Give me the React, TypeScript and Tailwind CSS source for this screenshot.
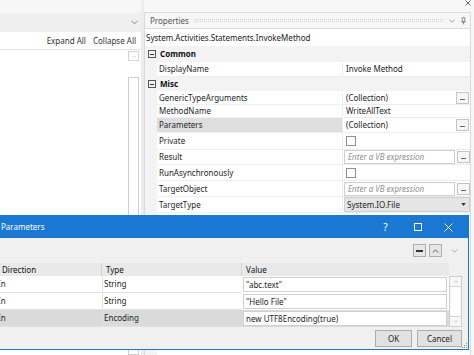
import React from 'react';

const Chevron = ({ className = '' }: { className?: string }) => (
  <svg viewBox="0 0 8 5" className={className} fill="none" stroke="currentColor" strokeWidth="1">
    <path d="M0.5 0.5 4 4 7.5 0.5" />
  </svg>
);

const Expander = () => (
  <div className="w-[8px] h-[8px] border border-[#555] flex items-center justify-center">
    <div className="w-[4px] h-px bg-[#333]" />
  </div>
);

const Dots = () => (
  <div className="w-[13px] h-[12px] border border-[#c4c4c4] bg-[#f6f6f6] flex items-end justify-center pb-[3px]">
    <div className="w-[5px] h-px bg-[#666]" />
  </div>
);

const Check = () => <div className="ml-[3px] w-[10px] h-[10px] border border-[#8f8f8f] bg-white" />;

const Expr = () => (
  <div className="ml-[1px] w-[111px] h-[14px] border border-[#cfcfcf] bg-white italic text-[#8e8e8e] pl-[3px] flex items-center">
    Enter a VB expression
  </div>
);

type Prop = { name: string; h: string; value: React.ReactNode; selected?: boolean };

const Category = ({ label, h }: { label: string; h: string }) => (
  <div className={`flex items-center bg-[#f3f3f3] ${h}`}>
    <div className="w-[12px] flex justify-center pl-[1px]">
      <Expander />
    </div>
    <span className="pl-[3px] font-bold text-[#111]">{label}</span>
  </div>
);

const PropRow = ({ p }: { p: Prop }) => (
  <div className={`flex ${p.h}`}>
    <div className="w-[12px] bg-[#f3f3f3]" />
    <div
      className={`w-[185px] flex items-center pl-[2px] border-b border-[#f0f0f0] ${
        p.selected ? 'bg-[#dedede]' : 'bg-white'
      }`}
    >
      {p.name}
    </div>
    <div className="flex-1 flex items-center border-l border-b border-[#ececec] bg-white">{p.value}</div>
  </div>
);

const LeftPanel = () => (
  <div className="w-[143px] flex flex-col">
    <div className="h-[13px]" />
    <div className="h-[19px] bg-[#efefef] flex items-center justify-end pr-[3px]">
      <Chevron className="w-[7px] h-[5px] text-[#777]" />
    </div>
    <div className="h-[18px] bg-white border-b border-[#e2e2e2] flex items-center justify-end gap-[7px] pr-[5px] text-[#333]">
      <span>Expand All</span>
      <span>Collapse All</span>
    </div>
    <div className="flex-1 bg-white flex justify-end pr-[2px]">
      <div className="w-[11px] flex flex-col">
        <div className="mt-[1px] h-[10px] border border-[#d4d4d4] flex items-center justify-center">
          <Chevron className="w-[4px] h-[3px] text-[#999] rotate-180" />
        </div>
        <div className="mt-[16px] flex-1 border border-[#cfcfcf] bg-white" />
      </div>
    </div>
  </div>
);

const PropertiesPanel = () => {
  const misc: Prop[] = [
    {
      name: 'GenericTypeArguments',
      h: 'h-[14px]',
      value: (
        <div className="flex items-center w-full">
          <span className="pl-[3px] flex-1">(Collection)</span>
          <Dots />
          <div className="w-[1px]" />
        </div>
      ),
    },
    { name: 'MethodName', h: 'h-[13px]', value: <span className="pl-[3px]">WriteAllText</span> },
    {
      name: 'Parameters',
      h: 'h-[15px]',
      selected: true,
      value: (
        <div className="flex items-center w-full">
          <span className="pl-[3px] flex-1">(Collection)</span>
          <Dots />
          <div className="w-[1px]" />
        </div>
      ),
    },
    { name: 'Private', h: 'h-[17px]', value: <Check /> },
    {
      name: 'Result',
      h: 'h-[15px]',
      value: (
        <div className="flex items-center w-full gap-[2px]">
          <Expr />
          <Dots />
        </div>
      ),
    },
    { name: 'RunAsynchronously', h: 'h-[16px]', value: <Check /> },
    {
      name: 'TargetObject',
      h: 'h-[16px]',
      value: (
        <div className="flex items-center w-full gap-[2px]">
          <Expr />
          <Dots />
        </div>
      ),
    },
    {
      name: 'TargetType',
      h: 'h-[16px]',
      value: (
        <div className="ml-[1px] w-full h-[15px] bg-[#e5e5e5] border border-[#cfcfcf] flex items-center justify-between pl-[2px] pr-[3px]">
          <span>System.IO.File</span>
          <svg viewBox="0 0 6 4" className="w-[5px] h-[3px]">
            <path d="M0 0h6L3 4z" fill="#333" />
          </svg>
        </div>
      ),
    },
  ];

  return (
    <div className="flex-1 flex flex-col pr-[3px]">
      <div className="h-[12px]" />
      <div className="h-[17px] border border-[#dadada] bg-[#f6f6f6] flex items-center pl-[5px] pr-[4px] gap-[6px] text-[#555]">
        <span>Properties</span>
        <div className="flex-1 h-[3px] border-y border-dotted border-[#d2d2d2]" />
        <Chevron className="w-[6px] h-[4px] text-[#888]" />
        <svg viewBox="0 0 6 9" className="w-[5px] h-[8px] text-[#777]" fill="none" stroke="currentColor" strokeWidth="1">
          <path d="M1.5 0.5h3v5h-3zM0.5 5.5h5M3 5.5v3" />
        </svg>
      </div>
      <div className="flex-1 flex flex-col bg-white border-l border-r border-[#dadada]">
        <div className="h-[17px] flex items-center pl-[1px] text-[#222]">System.Activities.Statements.InvokeMethod</div>
        <Category label="Common" h="h-[16px]" />
        <PropRow p={{ name: 'DisplayName', h: 'h-[15px]', value: <span className="pl-[3px]">Invoke Method</span> }} />
        <Category label="Misc" h="h-[14px]" />
        {misc.map((p) => (
          <PropRow key={p.name} p={p} />
        ))}
        <div className="flex-1 flex">
          <div className="w-[12px] bg-[#f3f3f3]" />
        </div>
      </div>
    </div>
  );
};

const rows = [
  { type: 'String', value: '"abc.text"', sel: false },
  { type: 'String', value: '"Hello File"', sel: false },
  { type: 'Encoding', value: 'new UTF8Encoding(true)', sel: true },
];

const Dialog = () => (
  <div className="absolute top-[215px] left-[-30px] w-[499px] h-[135px] border border-[#1a78d2] bg-[#f0f0f0] flex flex-col">
    <div className="h-[22px] bg-[#1a78d2] text-white flex items-center pl-[30px] pr-[7px] shrink-0">
      <span className="flex-1">Parameters</span>
      <span className="w-[34px] pl-[3px] text-center text-[10px]">?</span>
      <span className="w-[34px] flex justify-center">
        <div className="w-[8px] h-[8px] border border-white" />
      </span>
      <span className="w-[26px] flex justify-center">
        <svg viewBox="0 0 9 9" className="w-[9px] h-[9px]" stroke="white" strokeWidth="1">
          <path d="M0.5 0.5 8.5 8.5M8.5 0.5 0.5 8.5" />
        </svg>
      </span>
    </div>
    <div className="h-[25px] flex items-center justify-end gap-[3px] pr-[7px] shrink-0">
      <div className="w-[13px] h-[13px] border border-[#adadad] bg-[#e6e6e6] flex items-center justify-center">
        <div className="w-[7px] h-[2px] bg-[#333]" />
      </div>
      <div className="w-[13px] h-[13px] border border-[#adadad] bg-[#e6e6e6] flex items-center justify-center">
        <Chevron className="w-[7px] h-[4px] text-[#333] rotate-180" />
      </div>
      <div className="ml-[3px] w-[13px] h-[13px] flex items-center justify-center">
        <Chevron className="w-[7px] h-[4px] text-[#9a9a9a]" />
      </div>
    </div>
    <div className="pl-[9px] pr-[7px] grid grid-cols-[122px_140px_207px_13px] grid-rows-[13px_17px_17px_17px]">
      <div className="bg-[#e9e9e9] border-r border-[#d2d2d2] pl-[22px] flex items-center text-[#111]">Direction</div>
      <div className="bg-[#e9e9e9] border-r border-[#d2d2d2] pl-[4px] flex items-center text-[#111]">Type</div>
      <div className="bg-[#e9e9e9] pl-[4px] flex items-center text-[#111]">Value</div>
      <div />
      {rows.map((r, i) => (
        <React.Fragment key={i}>
          <div className={`pl-[18px] flex items-center border-b border-[#e2e2e2] ${r.sel ? 'bg-[#dadada]' : 'bg-white'}`}>In</div>
          <div
            className={`pl-[1px] flex items-center border-b border-l border-[#e2e2e2] ${r.sel ? 'bg-[#dadada]' : 'bg-white'}`}
          >
            {r.type}
          </div>
          <div className={`flex items-center pl-[1px] pr-[2px] ${r.sel ? 'bg-[#dadada]' : 'bg-white'}`}>
            <div className="w-full h-[15px] border border-[#d0d0d0] bg-white pl-[2px] flex items-center">{r.value}</div>
          </div>
          {i === 0 && (
            <div className="row-span-3 border border-[#cfcfcf] bg-[#f7f7f7] flex flex-col justify-between">
              <div className="h-[10px] border-b border-[#d6d6d6] flex items-center justify-center">
                <Chevron className="w-[4px] h-[3px] text-[#999] rotate-180" />
              </div>
              <div className="flex-1 mx-[1px] bg-white" />
              <div className="h-[10px] border-t border-[#d6d6d6] flex items-center justify-center">
                <Chevron className="w-[4px] h-[3px] text-[#999]" />
              </div>
            </div>
          )}
        </React.Fragment>
      ))}
    </div>
    <div className="flex-1 flex justify-end items-start gap-[5px] pt-[3px] pr-[6px]">
      <div className="w-[37px] h-[17px] border border-[#adadad] bg-[#e1e1e1] flex items-center justify-center">OK</div>
      <div className="w-[45px] h-[17px] border border-[#adadad] bg-[#e1e1e1] flex items-center justify-center">Cancel</div>
    </div>
    <div className="absolute right-[1px] bottom-[1px] grid grid-cols-3 gap-[1px]">
      <span />
      <span />
      <span className="w-px h-px bg-[#888]" />
      <span />
      <span className="w-px h-px bg-[#888]" />
      <span className="w-px h-px bg-[#888]" />
      <span className="w-px h-px bg-[#888]" />
      <span className="w-px h-px bg-[#888]" />
      <span className="w-px h-px bg-[#888]" />
    </div>
  </div>
);

export default function App() {
  return (
    <div className="relative w-[474px] h-[355px] overflow-hidden bg-[#f7f7f7] text-[8px] leading-none text-[#1e1e1e] font-['Noto_Sans',sans-serif]">
      <div className="flex h-full">
        <LeftPanel />
        <div className="w-[3px] bg-[#ececec]" />
        <PropertiesPanel />
      </div>
      <svg viewBox="0 0 7 7" className="absolute top-[0px] right-[3px] w-[6px] h-[6px]" stroke="#555" strokeWidth="1">
        <path d="M0.5 0.5 6.5 6.5M6.5 0.5 0.5 6.5" />
      </svg>
      <Dialog />
    </div>
  );
}
